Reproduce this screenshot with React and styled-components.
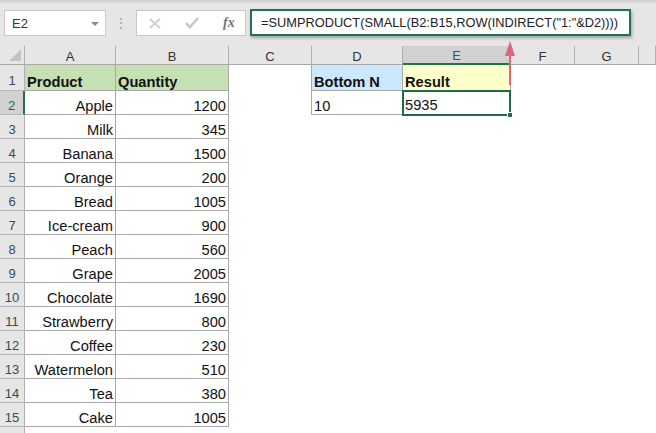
import React from 'react';
import styled, { createGlobalStyle } from 'styled-components';

const Global = createGlobalStyle`
  html, body { margin: 0; padding: 0; background: #fff; }
  body { font-family: "Liberation Sans", Arial, sans-serif; }
`;
const Page = styled.div`
  position: relative; width: 656px; height: 433px; overflow: hidden; background: #fff;
`;
const Toolbar = styled.div`
  height: 46px; box-sizing: border-box; padding: 10px 0 0 4px; display: flex; align-items: flex-start;
  background: linear-gradient(#cdcdcd 0, #e6e6e6 4px);
`;
const NameBox = styled.div`
  width: 102px; height: 26px; box-sizing: border-box; background: #fff; border: 1px solid #c8c8c8;
  display: flex; align-items: center; justify-content: space-between; padding: 1px 6px 0 7px;
  font-size: 13px; color: #333;
`;
const Caret = styled.span`
  width: 0; height: 0; border-left: 4px solid transparent; border-right: 4px solid transparent; border-top: 4px solid #8a8a8a;
`;
const Dots = styled.div`
  width: 30px; height: 26px; display: flex; flex-direction: column; align-items: center; justify-content: center; gap: 2.5px;
  & > i { width: 2px; height: 2px; background: #b4b4b4; display: block; }
`;
const Buttons = styled.div`
  width: 110px; height: 26px; box-sizing: border-box; background: #fff; border: 1px solid #c8c8c8;
  display: flex; align-items: center; padding-left: 12px;
`;
const Btn = styled.span`
  width: 36px; display: flex; align-items: center; justify-content: flex-start;
`;
const Fx = styled.span`
  font-family: "Liberation Serif", serif; font-style: italic; font-weight: bold; font-size: 14px; color: #757575; margin-left: 2px;
`;
const Formula = styled.div`
  position: absolute; left: 250px; top: 9px; width: 381px; height: 27px; box-sizing: border-box;
  border: 2px solid #1f6f63; background: #fff; box-shadow: 1px 2px 3px rgba(0,0,0,.3);
  font-size: 12.8px; color: #222; padding-left: 9px; line-height: 24px; white-space: nowrap;
`;
const Sheet = styled.div`
  display: grid;
  grid-template-columns: 25px 91px 113px 83px 91px 108px 64px 64px 17px;
  grid-template-rows: 19px 26px repeat(14, 24px) 6px;
`;
const Head = styled.div`
  background: ${p => p.$active ? '#d2d2d2' : '#e6e6e6'};
  border-right: 1px solid #b0b0b0; border-bottom: ${p => p.$active ? '2px solid #217346' : '1px solid #a8a8a8'};
  box-sizing: border-box; display: flex; align-items: center; justify-content: center;
  font-size: 13px; color: ${p => p.$active ? '#1d6b45' : '#333'}; padding-top: 2px;
`;
const Corner = styled(Head)`
  position: relative;
  &::after { content: ''; position: absolute; right: 3px; bottom: 3px; width: 0; height: 0;
    border-left: 12px solid transparent; border-bottom: 12px solid #c2c2c2; }
`;
const RowHead = styled.div`
  background: ${p => p.$active ? '#d2d2d2' : '#e6e6e6'};
  border-right: ${p => p.$active ? '2px solid #217346' : '1px solid #b0b0b0'};
  border-bottom: 1px solid #b8b8b8; box-sizing: border-box; display: flex; align-items: center; justify-content: center;
  font-size: 13px; color: ${p => p.$active ? '#1d6b45' : '#3a4a55'}; padding-top: 6px;
`;
const Cell = styled.div`
  box-sizing: border-box; font-size: 14.67px; color: #111; display: flex; align-items: center; white-space: nowrap; overflow: hidden;
  padding: ${p => p.$bold ? 8 : 6}px 2px 0 2px;
  justify-content: ${p => p.$right ? 'flex-end' : 'flex-start'};
  font-weight: ${p => p.$bold ? 700 : 400};
  background: ${p => p.$bg || '#fff'};
  border-right: ${p => p.$line || p.$edge ? '1px solid #a8a8a8' : 'none'};
  border-bottom: ${p => p.$line ? '1px solid #a8a8a8' : 'none'};
`;
const Selected = styled(Cell)`
  position: relative; border: 2px solid #1d6b45; margin: -1px 0 -1px -1px; padding: 4px 0 0 1px; overflow: visible;
  &::after { content: ''; position: absolute; right: -4px; bottom: -4px; width: 4px; height: 4px; background: #1d6b45; border: 1px solid #fff; }
`;
const Arrow = styled.svg`
  position: absolute; left: 502px; top: 40px;
`;

const rows = [['Apple',1200],['Milk',345],['Banana',1500],['Orange',200],['Bread',1005],['Ice-cream',900],['Peach',560],['Grape',2005],['Chocolate',1690],['Strawberry',800],['Coffee',230],['Watermelon',510],['Tea',380],['Cake',1005]];
const cols = ['A','B','C','D','E','F','G'];

export default function App() {
  return (
    <Page>
      <Global />
      <Toolbar>
        <NameBox>E2<Caret /></NameBox>
        <Dots><i /><i /><i /></Dots>
        <Buttons>
          <Btn><svg width="12" height="11" viewBox="0 0 12 11"><path d="M1 1 L11 10 M11 1 L1 10" stroke="#d0d0d0" strokeWidth="2" /></svg></Btn>
          <Btn><svg width="14" height="12" viewBox="0 0 14 12"><path d="M1 6 L5 10 L13 1" stroke="#c8c8c8" strokeWidth="2.6" fill="none" /></svg></Btn>
          <Fx>fx</Fx>
        </Buttons>
      </Toolbar>
      <Formula>=SUMPRODUCT(SMALL(B2:B15,ROW(INDIRECT("1:"&amp;D2))))</Formula>
      <Sheet>
        <Corner />
        {cols.map(c => <Head key={c} $active={c === 'E'}>{c}</Head>)}
        <Head />
        <RowHead>1</RowHead>
        <Cell $bold $bg="#c6e0b4" $line>Product</Cell>
        <Cell $bold $bg="#c6e0b4" $line>Quantity</Cell>
        <Cell $edge />
        <Cell $bold $bg="#cce8ff" $line>Bottom N</Cell>
        <Cell $bold $bg="#ffffcc" $line>Result</Cell>
        <Cell /><Cell /><Cell />
        {rows.map((r, i) => (
          <React.Fragment key={r[0] + i}>
            <RowHead $active={i === 0}>{i + 2}</RowHead>
            <Cell $right $line>{r[0]}</Cell>
            <Cell $right $line>{r[1]}</Cell>
            <Cell $edge={i === 0} />
            {i === 0 ? <><Cell $line>10</Cell><Selected>5935</Selected></> : <><Cell /><Cell /></>}
            <Cell /><Cell /><Cell />
          </React.Fragment>
        ))}
        <RowHead />
      </Sheet>
      <Arrow width="16" height="50" viewBox="0 0 16 50">
        <path d="M8 1 L13 16 L9 16 L9 45 L7 45 L7 16 L3 16 Z" fill="#e0647c" />
      </Arrow>
    </Page>
  );
}
